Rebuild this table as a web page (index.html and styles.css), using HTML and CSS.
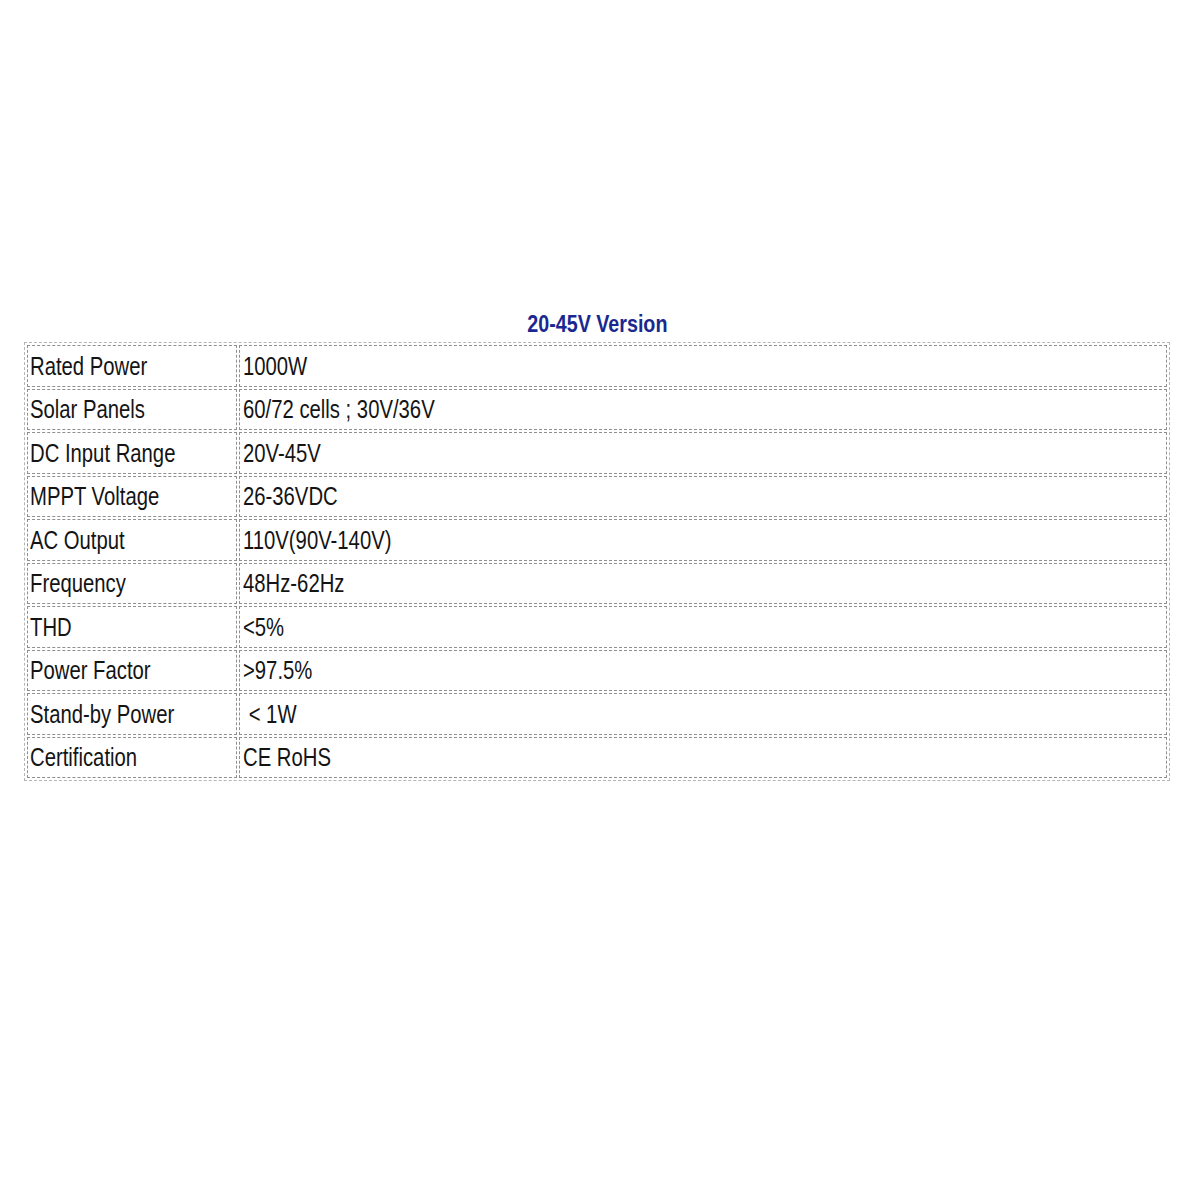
FILE: index.html
```html
<!DOCTYPE html>
<html>
<head>
<meta charset="utf-8">
<link rel="stylesheet" href="styles.css">
</head>
<body>
<div class="page">
  <div class="title"><span class="squeeze">20-45V Version</span></div>
  <table class="spec">
    <tr><td class="k"><span class="squeeze">Rated Power</span></td><td><span class="squeeze">1000W</span></td></tr>
    <tr><td class="k"><span class="squeeze">Solar Panels</span></td><td><span class="squeeze">60/72 cells ; 30V/36V</span></td></tr>
    <tr><td class="k"><span class="squeeze">DC Input Range</span></td><td><span class="squeeze">20V-45V</span></td></tr>
    <tr><td class="k"><span class="squeeze">MPPT Voltage</span></td><td><span class="squeeze">26-36VDC</span></td></tr>
    <tr><td class="k"><span class="squeeze">AC Output</span></td><td><span class="squeeze">110V(90V-140V)</span></td></tr>
    <tr><td class="k"><span class="squeeze">Frequency</span></td><td><span class="squeeze">48Hz-62Hz</span></td></tr>
    <tr><td class="k"><span class="squeeze">THD</span></td><td><span class="squeeze">&lt;5%</span></td></tr>
    <tr><td class="k"><span class="squeeze">Power Factor</span></td><td><span class="squeeze">&gt;97.5%</span></td></tr>
    <tr><td class="k"><span class="squeeze">Stand-by Power</span></td><td><span class="squeeze">&nbsp;&lt; 1W</span></td></tr>
    <tr><td class="k"><span class="squeeze">Certification</span></td><td><span class="squeeze">CE RoHS</span></td></tr>
  </table>
</div>
</body>
</html>
```
FILE: styles.css
```css
html, body {
  margin: 0;
  padding: 0;
  background: #ffffff;
}
body {
  font-family: "Liberation Sans", Arial, sans-serif;
  color: #141414;
}
.page {
  width: 1200px;
  padding-top: 309px;
}
.title {
  width: 1146px;
  margin-left: 24px;
  text-align: center;
  font-size: 24px;
  font-weight: bold;
  color: #1a2890;
  line-height: 30px;
  height: 33px;
}
.title .squeeze {
  transform: scaleX(0.82);
  transform-origin: center;
}
.squeeze {
  display: inline-block;
  transform: scaleX(0.78);
  transform-origin: left center;
  white-space: nowrap;
}
.spec {
  width: 1146px;
  margin-left: 24px;
  border: 1px dashed #b5b5b5;
  border-collapse: separate;
  border-spacing: 2px;
}
.spec td {
  border: 1px dashed #8f8f8f;
  height: 39.5px;
  padding: 0 0 0 3px;
  font-size: 26px;
  line-height: 30px;
  vertical-align: middle;
}
.spec td.k {
  width: 206px;
  padding-left: 2px;
}
```
